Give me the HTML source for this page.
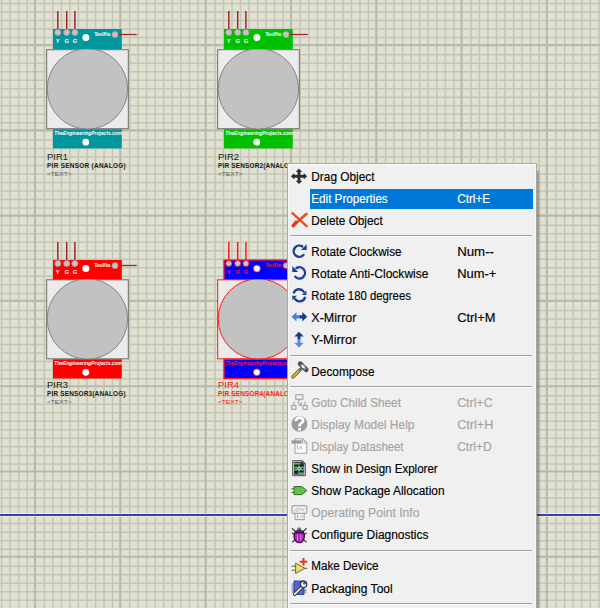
<!DOCTYPE html>
<html><head><meta charset="utf-8">
<style>
html,body{margin:0;padding:0;width:600px;height:608px;overflow:hidden;background:#E0E1D1;}
body{position:relative;font-family:"Liberation Sans",sans-serif;}
#menu{position:absolute;left:287px;top:163px;width:250px;height:470px;background:#F0F0F0;border:1px solid #A8A8A8;box-sizing:border-box;box-shadow:1px 4px 0 -3px #64645E, 3px 6px 3px -2px rgba(0,0,0,0.5);}
#menu:before{content:"";position:absolute;left:0;top:0;right:0;bottom:0;border:1px solid #F8F8F8;}
.hl{position:absolute;left:22.3px;width:222.3px;height:20px;background:#0078D7;}
.sep{position:absolute;left:2.2px;width:242.3px;height:1px;background:#A0A0A0;border-bottom:1px solid #FCFCFC;}
#ic{position:absolute;left:0;top:0;}
</style></head><body>
<svg width="600" height="608" viewBox="0 0 600 608" style="position:absolute;left:0;top:0" font-family="Liberation Sans, sans-serif">
<rect width="600" height="608" fill="#E0E1D1"/>
<path d="M1.68 0V608M10.21 0V608M18.74 0V608M27.27 0V608M44.33 0V608M52.86 0V608M61.39 0V608M69.92 0V608M78.45 0V608M86.99 0V608M95.52 0V608M104.05 0V608M112.58 0V608M129.64 0V608M138.17 0V608M146.70 0V608M155.23 0V608M163.77 0V608M172.30 0V608M180.83 0V608M189.36 0V608M197.89 0V608M214.95 0V608M223.48 0V608M232.01 0V608M240.54 0V608M249.08 0V608M257.61 0V608M266.14 0V608M274.67 0V608M283.20 0V608M300.26 0V608M308.79 0V608M317.32 0V608M325.85 0V608M334.39 0V608M342.92 0V608M351.45 0V608M359.98 0V608M368.51 0V608M385.57 0V608M394.10 0V608M402.63 0V608M411.16 0V608M419.70 0V608M428.23 0V608M436.76 0V608M445.29 0V608M453.82 0V608M470.88 0V608M479.41 0V608M487.94 0V608M496.47 0V608M505.01 0V608M513.54 0V608M522.07 0V608M530.60 0V608M539.13 0V608M556.19 0V608M564.72 0V608M573.25 0V608M581.78 0V608M590.31 0V608M598.85 0V608M0 3.47H600M0 11.99H600M0 20.52H600M0 29.05H600M0 37.57H600M0 54.63H600M0 63.15H600M0 71.68H600M0 80.21H600M0 88.73H600M0 97.26H600M0 105.79H600M0 114.32H600M0 122.84H600M0 139.90H600M0 148.42H600M0 156.95H600M0 165.48H600M0 174.00H600M0 182.53H600M0 191.06H600M0 199.59H600M0 208.11H600M0 225.17H600M0 233.69H600M0 242.22H600M0 250.75H600M0 259.27H600M0 267.80H600M0 276.33H600M0 284.86H600M0 293.38H600M0 310.44H600M0 318.96H600M0 327.49H600M0 336.02H600M0 344.55H600M0 353.07H600M0 361.60H600M0 370.13H600M0 378.65H600M0 395.71H600M0 404.23H600M0 412.76H600M0 421.29H600M0 429.81H600M0 438.34H600M0 446.87H600M0 455.40H600M0 463.92H600M0 480.98H600M0 489.50H600M0 498.03H600M0 506.56H600M0 515.08H600M0 523.61H600M0 532.14H600M0 540.67H600M0 549.19H600M0 566.25H600M0 574.77H600M0 583.30H600M0 591.83H600M0 600.36H600M0 608.88H600" stroke="#C3C5B6" stroke-width="1.5" fill="none"/>
<path d="M35.00 0V608M120.31 0V608M205.62 0V608M290.93 0V608M376.24 0V608M461.55 0V608M546.86 0V608M0 45.10H600M0 130.37H600M0 215.64H600M0 300.91H600M0 386.18H600M0 471.45H600M0 556.72H600" stroke="#B7B9AB" stroke-width="2.1" fill="none"/>
<path d="M0 513.6H600M0 516.4H600" stroke="#F0F0CC" stroke-width="1"/>
<path d="M0 515H600" stroke="#3A3AC6" stroke-width="1.8"/>
<g transform="translate(0,0)">
<rect x="53" y="29" width="68.8" height="20.2" fill="#00969E"/>
<path d="M57.8 11V30" stroke="#9E2828" stroke-width="1.5"/>
<path d="M66.7 11V30" stroke="#9E2828" stroke-width="1.5"/>
<path d="M74.9 11V30" stroke="#9E2828" stroke-width="1.5"/>
<path d="M117 34.5H136.7" stroke="#9E2828" stroke-width="1.3"/>
<circle cx="57.8" cy="32.5" r="3" fill="#C4C4C4" stroke="#B89A9A" stroke-width="0.8"/>
<circle cx="66.7" cy="32.5" r="3" fill="#C4C4C4" stroke="#B89A9A" stroke-width="0.8"/>
<circle cx="74.9" cy="32.5" r="3" fill="#C4C4C4" stroke="#B89A9A" stroke-width="0.8"/>
<circle cx="115" cy="34.6" r="3" fill="#C4C4C4" stroke="#B89A9A" stroke-width="0.8"/>
<text x="57.8" y="43.3" font-size="5.8" font-weight="bold" fill="#FFFFFF" text-anchor="middle">Y</text>
<text x="66.7" y="43.3" font-size="5.8" font-weight="bold" fill="#FFFFFF" text-anchor="middle">G</text>
<text x="74.9" y="43.3" font-size="5.8" font-weight="bold" fill="#FFFFFF" text-anchor="middle">G</text>
<circle cx="85.9" cy="37.6" r="3.5" fill="#FFFFFF"/>
<text x="94.2" y="35.5" font-size="6.4" font-weight="bold" font-family="Liberation Serif, serif" fill="#FFFFFF" textLength="16" lengthAdjust="spacingAndGlyphs">TestPin</text>
<g transform="translate(0,0)">
<rect x="46.7" y="49.7" width="81.6" height="79" fill="#EBEBEB" stroke="#6E6E6E" stroke-width="1"/>
<clipPath id="c0_0"><rect x="46.2" y="49.2" width="82.6" height="80"/></clipPath>
<circle cx="87.4" cy="88.9" r="40.2" fill="#C2C2C2" stroke="#858585" stroke-width="1" clip-path="url(#c0_0)"/>
<rect x="53" y="129.2" width="68.8" height="19.2" fill="#00969E"/>
<text x="54.2" y="135" font-size="5.4" font-weight="bold" font-style="italic" fill="#FFFFFF" textLength="68" lengthAdjust="spacingAndGlyphs">TheEngineeringProjects.com</text>
<circle cx="85.8" cy="142.2" r="3.4" fill="#FFFFFF"/>
</g>
<g transform="translate(0,0)">
<text x="47" y="159.8" font-size="9.8" fill="#1A1A1A" textLength="21" lengthAdjust="spacingAndGlyphs">PIR1</text>
<text x="47" y="167.8" font-size="6.4" font-weight="bold" fill="#1A1A1A" textLength="79" lengthAdjust="spacing" letter-spacing="0.4">PIR SENSOR (ANALOG)</text>
<text x="47" y="175.5" font-size="5.8" fill="#606060" textLength="24.5" lengthAdjust="spacingAndGlyphs">&lt;TEXT&gt;</text>
</g>
</g>
<g transform="translate(171,0)">
<rect x="53" y="29" width="68.8" height="20.2" fill="#00C000"/>
<path d="M57.8 11V30" stroke="#9E2828" stroke-width="1.5"/>
<path d="M66.7 11V30" stroke="#9E2828" stroke-width="1.5"/>
<path d="M74.9 11V30" stroke="#9E2828" stroke-width="1.5"/>
<path d="M117 34.5H136.7" stroke="#9E2828" stroke-width="1.3"/>
<circle cx="57.8" cy="32.5" r="3" fill="#C4C4C4" stroke="#B89A9A" stroke-width="0.8"/>
<circle cx="66.7" cy="32.5" r="3" fill="#C4C4C4" stroke="#B89A9A" stroke-width="0.8"/>
<circle cx="74.9" cy="32.5" r="3" fill="#C4C4C4" stroke="#B89A9A" stroke-width="0.8"/>
<circle cx="115" cy="34.6" r="3" fill="#C4C4C4" stroke="#B89A9A" stroke-width="0.8"/>
<text x="57.8" y="43.3" font-size="5.8" font-weight="bold" fill="#FFFFFF" text-anchor="middle">Y</text>
<text x="66.7" y="43.3" font-size="5.8" font-weight="bold" fill="#FFFFFF" text-anchor="middle">G</text>
<text x="74.9" y="43.3" font-size="5.8" font-weight="bold" fill="#FFFFFF" text-anchor="middle">G</text>
<circle cx="85.9" cy="37.6" r="3.5" fill="#FFFFFF"/>
<text x="94.2" y="35.5" font-size="6.4" font-weight="bold" font-family="Liberation Serif, serif" fill="#FFFFFF" textLength="16" lengthAdjust="spacingAndGlyphs">TestPin</text>
<g transform="translate(0,0)">
<rect x="46.7" y="49.7" width="81.6" height="79" fill="#EBEBEB" stroke="#6E6E6E" stroke-width="1"/>
<clipPath id="c171_0"><rect x="46.2" y="49.2" width="82.6" height="80"/></clipPath>
<circle cx="87.4" cy="88.9" r="40.2" fill="#C2C2C2" stroke="#858585" stroke-width="1" clip-path="url(#c171_0)"/>
<rect x="53" y="129.2" width="68.8" height="19.2" fill="#00C000"/>
<text x="54.2" y="135" font-size="5.4" font-weight="bold" font-style="italic" fill="#FFFFFF" textLength="68" lengthAdjust="spacingAndGlyphs">TheEngineeringProjects.com</text>
<circle cx="85.8" cy="142.2" r="3.4" fill="#FFFFFF"/>
</g>
<g transform="translate(0,0)">
<text x="47" y="159.8" font-size="9.8" fill="#1A1A1A" textLength="21" lengthAdjust="spacingAndGlyphs">PIR2</text>
<text x="47" y="167.8" font-size="6.4" font-weight="bold" fill="#1A1A1A" textLength="79" lengthAdjust="spacing" letter-spacing="0.4">PIR SENSOR2(ANALOG)</text>
<text x="47" y="175.5" font-size="5.8" fill="#606060" textLength="24.5" lengthAdjust="spacingAndGlyphs">&lt;TEXT&gt;</text>
</g>
</g>
<g transform="translate(0,231)">
<rect x="53" y="29" width="68.8" height="20.2" fill="#FF0000"/>
<path d="M57.8 11V30" stroke="#9E2828" stroke-width="1.5"/>
<path d="M66.7 11V30" stroke="#9E2828" stroke-width="1.5"/>
<path d="M74.9 11V30" stroke="#9E2828" stroke-width="1.5"/>
<path d="M117 34.5H136.7" stroke="#9E2828" stroke-width="1.3"/>
<circle cx="57.8" cy="32.5" r="3" fill="#C4C4C4" stroke="#B89A9A" stroke-width="0.8"/>
<circle cx="66.7" cy="32.5" r="3" fill="#C4C4C4" stroke="#B89A9A" stroke-width="0.8"/>
<circle cx="74.9" cy="32.5" r="3" fill="#C4C4C4" stroke="#B89A9A" stroke-width="0.8"/>
<circle cx="115" cy="34.6" r="3" fill="#C4C4C4" stroke="#B89A9A" stroke-width="0.8"/>
<text x="57.8" y="43.3" font-size="5.8" font-weight="bold" fill="#FFFFFF" text-anchor="middle">Y</text>
<text x="66.7" y="43.3" font-size="5.8" font-weight="bold" fill="#FFFFFF" text-anchor="middle">G</text>
<text x="74.9" y="43.3" font-size="5.8" font-weight="bold" fill="#FFFFFF" text-anchor="middle">G</text>
<circle cx="85.9" cy="37.6" r="3.5" fill="#FFFFFF"/>
<text x="94.2" y="35.5" font-size="6.4" font-weight="bold" font-family="Liberation Serif, serif" fill="#FFFFFF" textLength="16" lengthAdjust="spacingAndGlyphs">TestPin</text>
<g transform="translate(0,-0.9)">
<rect x="46.7" y="49.7" width="81.6" height="79" fill="#EBEBEB" stroke="#6E6E6E" stroke-width="1"/>
<clipPath id="c0_231"><rect x="46.2" y="49.2" width="82.6" height="80"/></clipPath>
<circle cx="87.4" cy="88.9" r="40.2" fill="#C2C2C2" stroke="#858585" stroke-width="1" clip-path="url(#c0_231)"/>
<rect x="53" y="129.2" width="68.8" height="19.2" fill="#FF0000"/>
<text x="54.2" y="135" font-size="5.4" font-weight="bold" font-style="italic" fill="#FFFFFF" textLength="68" lengthAdjust="spacingAndGlyphs">TheEngineeringProjects.com</text>
<circle cx="85.8" cy="142.2" r="3.4" fill="#FFFFFF"/>
</g>
<g transform="translate(0,-2.4)">
<text x="47" y="159.8" font-size="9.8" fill="#1A1A1A" textLength="21" lengthAdjust="spacingAndGlyphs">PIR3</text>
<text x="47" y="167.8" font-size="6.4" font-weight="bold" fill="#1A1A1A" textLength="79" lengthAdjust="spacing" letter-spacing="0.4">PIR SENSOR3(ANALOG)</text>
<text x="47" y="175.5" font-size="5.8" fill="#606060" textLength="24.5" lengthAdjust="spacingAndGlyphs">&lt;TEXT&gt;</text>
</g>
</g>
<g transform="translate(171,231)">
<rect x="53" y="29" width="68.8" height="20.2" fill="#0000FF" stroke="#FF1A1A" stroke-width="1.3"/>
<path d="M57.8 11V30" stroke="#FF1A1A" stroke-width="1.5"/>
<path d="M66.7 11V30" stroke="#FF1A1A" stroke-width="1.5"/>
<path d="M74.9 11V30" stroke="#FF1A1A" stroke-width="1.5"/>
<path d="M117 34.5H136.7" stroke="#FF1A1A" stroke-width="1.3"/>
<circle cx="57.8" cy="32.5" r="3" fill="#C4C4C4" stroke="#FF1A1A" stroke-width="0.8"/>
<circle cx="66.7" cy="32.5" r="3" fill="#C4C4C4" stroke="#FF1A1A" stroke-width="0.8"/>
<circle cx="74.9" cy="32.5" r="3" fill="#C4C4C4" stroke="#FF1A1A" stroke-width="0.8"/>
<circle cx="115" cy="34.6" r="3" fill="#C4C4C4" stroke="#FF1A1A" stroke-width="0.8"/>
<text x="57.8" y="43.3" font-size="5.8" font-weight="bold" fill="#FF1A1A" text-anchor="middle">Y</text>
<text x="66.7" y="43.3" font-size="5.8" font-weight="bold" fill="#FF1A1A" text-anchor="middle">G</text>
<text x="74.9" y="43.3" font-size="5.8" font-weight="bold" fill="#FF1A1A" text-anchor="middle">G</text>
<circle cx="85.9" cy="37.6" r="3.5" fill="#FFFFFF" stroke="#FF1A1A" stroke-width="0.8"/>
<text x="94.2" y="35.5" font-size="6.4" font-weight="bold" font-family="Liberation Serif, serif" fill="#FF1A1A" textLength="16" lengthAdjust="spacingAndGlyphs">TestPin</text>
<g transform="translate(0,-0.9)">
<rect x="46.7" y="49.7" width="81.6" height="79" fill="#EBEBEB" stroke="#FF1A1A" stroke-width="1"/>
<clipPath id="c171_231"><rect x="46.2" y="49.2" width="82.6" height="80"/></clipPath>
<circle cx="87.4" cy="88.9" r="40.2" fill="#C2C2C2" stroke="#FF1A1A" stroke-width="1" clip-path="url(#c171_231)"/>
<rect x="53" y="129.2" width="68.8" height="19.2" fill="#0000FF" stroke="#FF1A1A" stroke-width="1.3"/>
<text x="54.2" y="135" font-size="5.4" font-weight="bold" font-style="italic" fill="#FF1A1A" textLength="68" lengthAdjust="spacingAndGlyphs">TheEngineeringProjects.com</text>
<circle cx="85.8" cy="142.2" r="3.4" fill="#FFFFFF" stroke="#FF1A1A" stroke-width="0.8"/>
</g>
<g transform="translate(0,-2.4)">
<text x="47" y="159.8" font-size="9.8" fill="#FF1A1A" textLength="21" lengthAdjust="spacingAndGlyphs">PIR4</text>
<text x="47" y="167.8" font-size="6.4" font-weight="bold" fill="#FF1A1A" textLength="79" lengthAdjust="spacing" letter-spacing="0.4">PIR SENSOR4(ANALOG)</text>
<text x="47" y="175.5" font-size="5.8" fill="#FF1A1A" textLength="24.5" lengthAdjust="spacingAndGlyphs">&lt;TEXT&gt;</text>
</g>
</g>
</svg>
<div id="menu">
<div class="hl" style="top:24.84px"></div>
<div class="sep" style="top:71.48px"></div>
<div class="sep" style="top:190.94px"></div>
<div class="sep" style="top:222.24px"></div>
<div class="sep" style="top:385.78px"></div>
<div class="sep" style="top:439.12px"></div>
</div>
<svg id="ic" width="600" height="608" viewBox="0 0 600 608" font-family="Liberation Sans, sans-serif" font-size="12.0">
<text x="311.3" y="180.80" fill="#000000" stroke="#000000" stroke-width="0.15" textLength="63.20" lengthAdjust="spacingAndGlyphs">Drag Object</text>
<text x="311.3" y="202.84" fill="#FFFFFF" stroke="#FFFFFF" stroke-width="0.15" textLength="76.40" lengthAdjust="spacingAndGlyphs">Edit Properties</text>
<text x="457.2" y="202.84" fill="#FFFFFF" stroke="#FFFFFF" stroke-width="0.15" textLength="33.00" lengthAdjust="spacingAndGlyphs">Ctrl+E</text>
<text x="311.3" y="224.88" fill="#000000" stroke="#000000" stroke-width="0.15" textLength="71.40" lengthAdjust="spacingAndGlyphs">Delete Object</text>
<text x="311.3" y="256.18" fill="#000000" stroke="#000000" stroke-width="0.15" textLength="90.20" lengthAdjust="spacingAndGlyphs">Rotate Clockwise</text>
<text x="457.2" y="256.18" fill="#000000" stroke="#000000" stroke-width="0.15" textLength="36.80" lengthAdjust="spacingAndGlyphs">Num--</text>
<text x="311.3" y="278.22" fill="#000000" stroke="#000000" stroke-width="0.15" textLength="117.20" lengthAdjust="spacingAndGlyphs">Rotate Anti-Clockwise</text>
<text x="457.2" y="278.22" fill="#000000" stroke="#000000" stroke-width="0.15" textLength="39.20" lengthAdjust="spacingAndGlyphs">Num-+</text>
<text x="311.3" y="300.26" fill="#000000" stroke="#000000" stroke-width="0.15" textLength="99.60" lengthAdjust="spacingAndGlyphs">Rotate 180 degrees</text>
<text x="311.3" y="322.30" fill="#000000" stroke="#000000" stroke-width="0.15" textLength="45.20" lengthAdjust="spacingAndGlyphs">X-Mirror</text>
<text x="457.2" y="322.30" fill="#000000" stroke="#000000" stroke-width="0.15" textLength="38.20" lengthAdjust="spacingAndGlyphs">Ctrl+M</text>
<text x="311.3" y="344.34" fill="#000000" stroke="#000000" stroke-width="0.15" textLength="45.20" lengthAdjust="spacingAndGlyphs">Y-Mirror</text>
<text x="311.3" y="375.64" fill="#000000" stroke="#000000" stroke-width="0.15" textLength="63.20" lengthAdjust="spacingAndGlyphs">Decompose</text>
<text x="311.3" y="406.94" fill="#A4A4A4" stroke="#A4A4A4" stroke-width="0.15" textLength="89.60" lengthAdjust="spacingAndGlyphs">Goto Child Sheet</text>
<text x="457.2" y="406.94" fill="#A4A4A4" stroke="#A4A4A4" stroke-width="0.15" textLength="35.40" lengthAdjust="spacingAndGlyphs">Ctrl+C</text>
<text x="311.3" y="428.98" fill="#A4A4A4" stroke="#A4A4A4" stroke-width="0.15" textLength="103.20" lengthAdjust="spacingAndGlyphs">Display Model Help</text>
<text x="457.2" y="428.98" fill="#A4A4A4" stroke="#A4A4A4" stroke-width="0.15" textLength="36.20" lengthAdjust="spacingAndGlyphs">Ctrl+H</text>
<text x="311.3" y="451.02" fill="#A4A4A4" stroke="#A4A4A4" stroke-width="0.15" textLength="92.20" lengthAdjust="spacingAndGlyphs">Display Datasheet</text>
<text x="457.2" y="451.02" fill="#A4A4A4" stroke="#A4A4A4" stroke-width="0.15" textLength="34.40" lengthAdjust="spacingAndGlyphs">Ctrl+D</text>
<text x="311.3" y="473.06" fill="#000000" stroke="#000000" stroke-width="0.15" textLength="126.40" lengthAdjust="spacingAndGlyphs">Show in Design Explorer</text>
<text x="311.3" y="495.10" fill="#000000" stroke="#000000" stroke-width="0.15" textLength="133.20" lengthAdjust="spacingAndGlyphs">Show Package Allocation</text>
<text x="311.3" y="517.14" fill="#A4A4A4" stroke="#A4A4A4" stroke-width="0.15" textLength="108.20" lengthAdjust="spacingAndGlyphs">Operating Point Info</text>
<text x="311.3" y="539.18" fill="#000000" stroke="#000000" stroke-width="0.15" textLength="117.20" lengthAdjust="spacingAndGlyphs">Configure Diagnostics</text>
<text x="311.3" y="570.48" fill="#000000" stroke="#000000" stroke-width="0.15" textLength="67.20" lengthAdjust="spacingAndGlyphs">Make Device</text>
<text x="311.3" y="592.52" fill="#000000" stroke="#000000" stroke-width="0.15" textLength="81.40" lengthAdjust="spacingAndGlyphs">Packaging Tool</text>
<path transform="translate(299,176.3)" d="M0-7.5L2.9-4.6H1.2V-1.2H4.9V-2.8L8 0L4.9 2.8V1.2H1.2V4.7H2.9L0 7.4L-2.9 4.7H-1.2V1.2H-4.9V2.8L-7.8 0L-4.9-2.8V-1.2H-1.2V-4.6H-2.9Z" fill="#FFFFFF" stroke="#FFFFFF" stroke-width="1.6" stroke-linejoin="round" opacity="0.8"/>
<path transform="translate(299,176.3)" d="M0-7.5L2.9-4.6H1.2V-1.2H4.9V-2.8L8 0L4.9 2.8V1.2H1.2V4.7H2.9L0 7.4L-2.9 4.7H-1.2V1.2H-4.9V2.8L-7.8 0L-4.9-2.8V-1.2H-1.2V-4.6H-2.9Z" fill="#2C2C2C" stroke="#2C2C2C" stroke-width="0.5" stroke-linejoin="round"/>
<path d="M292.4 213.2L306.6 226.2" stroke="#E54E1E" stroke-width="2.4" stroke-linecap="round"/>
<path d="M306.5 213.8L293.6 225.4" stroke="#E54E1E" stroke-width="2.6" stroke-linecap="round"/>
<path d="M296 222.3L293.2 225.6" stroke="#D8400F" stroke-width="3.4" stroke-linecap="round"/>
<path d="M302.2 246.4A5.6 5.6 0 1 0 303.4 255" fill="none" stroke="#1C3F9C" stroke-width="2.4" stroke-linecap="round"/>
<path d="M306.7 244.2V249.9H301Z" fill="#1C3F9C"/>
<path d="M296.5 268.1A5.6 5.6 0 1 1 295.3 276.7" fill="none" stroke="#1C3F9C" stroke-width="2.4" stroke-linecap="round"/>
<path d="M292.3 266.1V271.9H298.1Z" fill="#1C3F9C"/>
<path d="M293.9 292.6A5.6 5.6 0 0 1 303.6 291.6" fill="none" stroke="#1C3F9C" stroke-width="2.4" stroke-linecap="round"/>
<path d="M306.4 290.5V295H301.9Z" fill="#1C3F9C"/>
<path d="M304.9 297.8A5.6 5.6 0 0 1 295.1 299" fill="none" stroke="#1C3F9C" stroke-width="2.4" stroke-linecap="round"/>
<path d="M292.3 300.2V295.7H296.9Z" fill="#1C3F9C"/>
<path d="M291.5 316.8L296.5 312.1V315.2H299.4V318.4H296.5V321.5Z" fill="#4E80D6"/>
<path d="M307.2 316.8L302.3 312.1V315.2H299.3V318.4H302.3V321.5Z" fill="#17389A"/>
<path d="M299 331.8L303.7 336.5H300.5V339.6H297.5V336.5H294.3Z" fill="#17389A"/>
<path d="M299 347.5L303.7 342.7H300.5V339.5H297.5V342.7H294.3Z" fill="#5A8AE0"/>
<path d="M292.9 376.9L299.6 370.2" stroke="#5C4A18" stroke-width="3.4" stroke-linecap="round"/>
<path d="M292.9 376.9L299.6 370.2" stroke="#E2B232" stroke-width="2" stroke-linecap="round"/>
<path d="M299.2 370.6L302.6 367.2" stroke="#6A6E72" stroke-width="3"/>
<path d="M300.2 363.8L306.2 369.8" stroke="#4A4E52" stroke-width="4.8" stroke-linecap="round"/>
<path d="M300.9 364.5L305.5 369.1" stroke="#9AA2AA" stroke-width="2.6"/>
<circle cx="303.2" cy="366.6" r="1.5" fill="#EEF6FC"/>
<rect x="295.8" y="394.7" width="7" height="4.6" fill="none" stroke="#A6A6A6" stroke-width="1.2"/>
<rect x="291.7" y="405.5" width="4.2" height="3.8" fill="none" stroke="#A6A6A6" stroke-width="1.2"/>
<rect x="303" y="405.5" width="4.2" height="3.8" fill="none" stroke="#A6A6A6" stroke-width="1.2"/>
<path d="M294 401.5V405M305 401.5V405M299.6 398.5L298 404" stroke="#A6A6A6" stroke-width="1.1"/>
<path d="M298 405.8L301.8 401.5V405.8Z" fill="#A6A6A6"/>
<circle cx="299.4" cy="423.9" r="7.9" fill="#9C9C9C"/>
<path d="M295.9 421.2C295.6 416.9 303.2 416.3 303.1 420.8C303 423.2 299.6 423.2 299.6 425.6V426.4" fill="none" stroke="#FFFFFF" stroke-width="2.8"/>
<rect x="298.2" y="428" width="2.8" height="2.6" fill="#FFFFFF"/>
<path d="M295 438.8H302.5L306.8 443V453.3H295Z" fill="#FAFAFA" stroke="#A6A6A6" stroke-width="1.1"/>
<path d="M302.5 438.8V443H306.8" fill="none" stroke="#A6A6A6" stroke-width="0.9"/>
<rect x="291.5" y="440.3" width="10.2" height="3.4" fill="#9A9A9A"/>
<path d="M297.4 445V448.5M297.5 449.5L302 446M300 447.5L302.5 448.5" stroke="#B0B0B0" stroke-width="0.9" fill="none"/>
<path d="M292.7 460.7H302.4L305.3 463.6V475.7H292.7Z" fill="#C8C8CC" stroke="#505050" stroke-width="1"/>
<rect x="294.2" y="462.2" width="9.6" height="12.3" fill="#2A1A34"/>
<path d="M302.2 460.7V463.8H305.3" fill="#707070" stroke="#404040" stroke-width="0.9"/>
<path d="M294.2 463.8H300.5M294.2 467.6H297.3M300.8 467.6H303.8M294.2 469.7H297.3M300.8 469.7H303.8M297.8 473.3H303.8" stroke="#4CD818" stroke-width="1.5"/>
<path d="M299 465.3L301.4 468.6L299 471.9L296.6 468.6Z" fill="#86CDEB"/>
<circle cx="299" cy="468.6" r="0.9" fill="#4A8AA8"/>
<path d="M291.4 488.8H294M291.4 492.4H294" stroke="#3C6A30" stroke-width="1"/>
<path d="M294 486.6H301.8L306.8 490.6L301.8 494.6H294Z" fill="#62C04E" stroke="#2E6A26" stroke-width="1"/>
<rect x="292" y="505.6" width="14.8" height="7.8" rx="1.2" fill="none" stroke="#A6A6A6" stroke-width="1.2"/>
<path d="M295 513.6V519.6H304.2V513.6" fill="none" stroke="#A6A6A6" stroke-width="1.1"/>
<path d="M294 511.5L298 507.5M296.5 512L300.5 508L302.5 510.5L304.3 508.8" fill="none" stroke="#A8A8A8" stroke-width="0.9"/>
<path d="M297.5 514.5V518.5M300.5 516.5H303" stroke="#A8A8A8" stroke-width="0.9"/>
<path d="M292 528.3L296.2 532.2M291.8 533L295.6 534.8M292 542.2L296.2 539M306.6 528.3L302.4 532.2M306.8 533L303 534.8M306.6 542.2L302.4 539" stroke="#5A3A5A" stroke-width="1.3"/>
<path d="M297.3 527.6H301.1V530.8H297.3Z" fill="#707070"/>
<path d="M299.2 530.2C303.6 530.2 304.4 533.5 304.4 536.6C304.4 540.2 301.6 542.8 299.2 542.8C296.8 542.8 294 540.2 294 536.6C294 533.5 294.8 530.2 299.2 530.2Z" fill="#A828B0" stroke="#2E0632" stroke-width="1.1"/>
<path d="M295.5 532.6H302.9" stroke="#2E0632" stroke-width="1.4"/>
<path d="M297.6 534.5V540.5M300.8 534.5V540.5" stroke="#F070F4" stroke-width="1.1"/>
<path d="M291.5 566.2H295.5M291.5 570.2H295.5M305 568.3H307.3" stroke="#606030" stroke-width="1"/>
<path d="M295.6 563.2L305 568.3L295.6 573.4Z" fill="#E6E070" stroke="#5E5E28" stroke-width="0.9" stroke-linejoin="round"/>
<path d="M303.5 558V565.4M299.8 561.7H307.2" stroke="#E8380E" stroke-width="2"/>
<path d="M291.5 584H294M291.5 586H294M291.5 588H294M291.5 590H294M291.5 592H294M304 590H306.5M304 592H306.5" stroke="#3A4A98" stroke-width="0.8"/>
<rect x="294" y="581" width="10" height="13.6" fill="#4A66E0" stroke="#23307A" stroke-width="0.8"/>
<path d="M294.8 594.2L302 586.8" stroke="#303030" stroke-width="3.4" stroke-linecap="round"/>
<path d="M294.8 594.2L302 586.8" stroke="#E8EEF4" stroke-width="1.8" stroke-linecap="round"/>
<circle cx="303.6" cy="584.3" r="3.2" fill="#E8EEF4" stroke="#303030" stroke-width="1.2"/>
<circle cx="304.5" cy="583.3" r="1.3" fill="#3850B8"/>
</svg>
</body></html>
